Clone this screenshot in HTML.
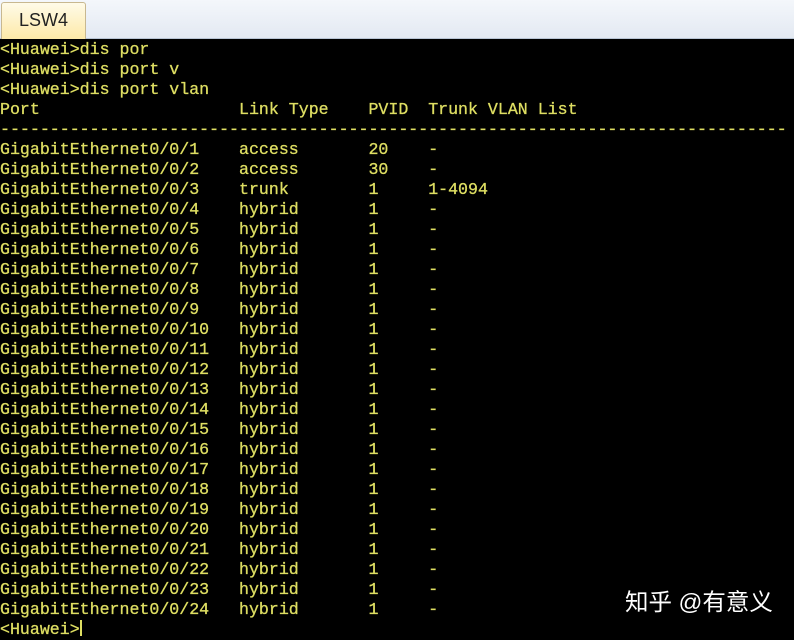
<!DOCTYPE html>
<html><head><meta charset="utf-8"><style>
html,body{margin:0;padding:0;width:794px;height:634px;overflow:hidden;background:#000;}
#bar{position:absolute;left:0;top:0;width:794px;height:38px;background:linear-gradient(#f4f7fb,#e3e9f2);border-bottom:1px solid #b8c4d4;}
#tab{position:absolute;left:1px;top:2px;width:83px;height:36px;background:linear-gradient(#fffbe8,#fde9a8);border:1px solid #c8b890;border-bottom:none;border-radius:3px 3px 0 0;font:18px "Liberation Sans",sans-serif;color:#222;text-align:center;line-height:34px;}
pre{position:absolute;left:0;top:40px;margin:0;font:16.6px/20px "Liberation Mono",monospace;color:#dede62;white-space:pre;-webkit-text-stroke:0.3px #dede62;}
#cur{display:inline-block;width:2px;height:16px;background:#dede62;vertical-align:-2px;}
#wm{position:absolute;left:625px;top:583px;font:23.5px "Liberation Sans","Noto Sans CJK SC",sans-serif;color:#fff;}
</style></head><body>
<div id="bar"><div id="tab">LSW4</div></div>
<pre>&lt;Huawei&gt;dis por
&lt;Huawei&gt;dis port v
&lt;Huawei&gt;dis port vlan
Port                    Link Type    PVID  Trunk VLAN List
-------------------------------------------------------------------------------
GigabitEthernet0/0/1    access       20    -
GigabitEthernet0/0/2    access       30    -
GigabitEthernet0/0/3    trunk        1     1-4094
GigabitEthernet0/0/4    hybrid       1     -
GigabitEthernet0/0/5    hybrid       1     -
GigabitEthernet0/0/6    hybrid       1     -
GigabitEthernet0/0/7    hybrid       1     -
GigabitEthernet0/0/8    hybrid       1     -
GigabitEthernet0/0/9    hybrid       1     -
GigabitEthernet0/0/10   hybrid       1     -
GigabitEthernet0/0/11   hybrid       1     -
GigabitEthernet0/0/12   hybrid       1     -
GigabitEthernet0/0/13   hybrid       1     -
GigabitEthernet0/0/14   hybrid       1     -
GigabitEthernet0/0/15   hybrid       1     -
GigabitEthernet0/0/16   hybrid       1     -
GigabitEthernet0/0/17   hybrid       1     -
GigabitEthernet0/0/18   hybrid       1     -
GigabitEthernet0/0/19   hybrid       1     -
GigabitEthernet0/0/20   hybrid       1     -
GigabitEthernet0/0/21   hybrid       1     -
GigabitEthernet0/0/22   hybrid       1     -
GigabitEthernet0/0/23   hybrid       1     -
GigabitEthernet0/0/24   hybrid       1     -
&lt;Huawei&gt;<span id="cur"></span></pre>
<div id="wm">知乎 @有意义</div>
</body></html>
